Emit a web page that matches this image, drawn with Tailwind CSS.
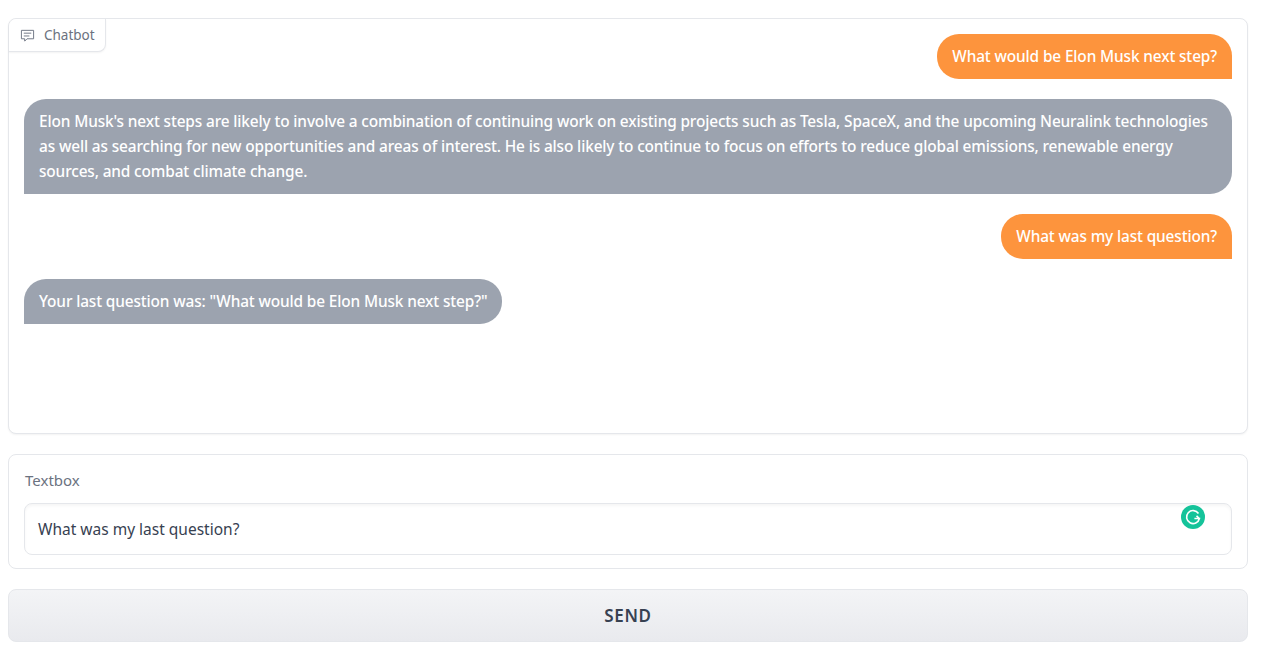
<!DOCTYPE html>
<html lang="en">
<head>
    <meta charset="UTF-8">
    <meta name="viewport" content="width=device-width, initial-scale=1.0">
    <title>Chatbot</title>
    <script src="https://cdn.jsdelivr.net/npm/@tailwindcss/browser@4"></script>
</head>
<body class="bg-white font-['Noto_Sans',sans-serif] h-[667px] overflow-hidden">
    <div class="pl-2 pr-6 pt-[18px] flex flex-col gap-5">

        <!-- Chatbot -->
        <div class="relative h-[416px] border border-[#e5e7eb] rounded-lg shadow-xs bg-white px-[15px] pt-[15px]">
            <div class="absolute left-0 top-0 h-[33px] flex items-center gap-[9px] pl-[11px] pr-[10px] border-r border-b border-[#e5e7eb] rounded-tl-lg rounded-br-lg shadow-xs bg-white text-[13.5px] text-[#6b7280]">
                <svg class="w-[15px] h-[15px]" viewBox="0 0 16 16" fill="none" stroke="#6b7280" stroke-width="1">
                    <path d="M1.500 2.500h13v9H7.500L5 14v-2.500H1.500z"/>
                    <path d="M4 5.500h8M4 8.500h6"/>
                </svg>
                <span>Chatbot</span>
            </div>
            <div class="flex flex-col gap-5 text-[15.4px] leading-[25px] text-white font-medium tracking-[-0.13px]">
                <div class="self-end bg-[#fd943d] rounded-[22px] rounded-br-none px-[15px] py-[10px]">What would be Elon Musk next step?</div>
                <div class="self-start bg-[#9ca3af] rounded-[22px] rounded-bl-none px-[15px] py-[10px]">Elon Musk's next steps are likely to involve a combination of continuing work on existing projects such as Tesla, SpaceX, and the upcoming Neuralink technologies as well as searching for new opportunities and areas of interest. He is also likely to continue to focus on efforts to reduce global emissions, renewable energy sources, and combat climate change.</div>
                <div class="self-end bg-[#fd943d] rounded-[22px] rounded-br-none px-[15px] py-[10px]">What was my last question?</div>
                <div class="self-start bg-[#9ca3af] rounded-[22px] rounded-bl-none px-[15px] py-[10px]">Your last question was: "What would be Elon Musk next step?"</div>
            </div>
        </div>

        <!-- Textbox -->
        <div class="h-[115px] border border-[#e5e7eb] rounded-lg bg-white px-[15px] pt-[13px]">
            <label class="block pl-px text-[#6b7280] text-[15px] leading-[25px] mb-[10px]">Textbox</label>
            <div class="relative h-[52px] border border-[#e5e7eb] rounded-lg shadow-[inset_0_2px_3px_rgba(0,0,0,0.04)] px-[13px] pt-px flex items-center text-[#374151] text-[15.5px]">
                What was my last question?
                <svg class="absolute right-[26px] top-[1px] w-6 h-6" viewBox="0 0 24 24">
                    <circle cx="12" cy="12" r="12" fill="#15c39a"/>
                    <path d="M17.500 8.500A6.500 6.500 0 1 0 18.400 13.500h-5M15.500 10.800L18.400 13.500" fill="none" stroke="#fff" stroke-width="1.600"/>
                </svg>
            </div>
        </div>

        <!-- Send -->
        <button class="h-[53px] border border-[#e5e7eb] rounded-lg bg-linear-to-b from-[#f3f4f6] to-[#e9eaee] text-[#374151] font-semibold text-[17px] tracking-[0.04em]">SEND</button>
    </div>
</body>
</html>
